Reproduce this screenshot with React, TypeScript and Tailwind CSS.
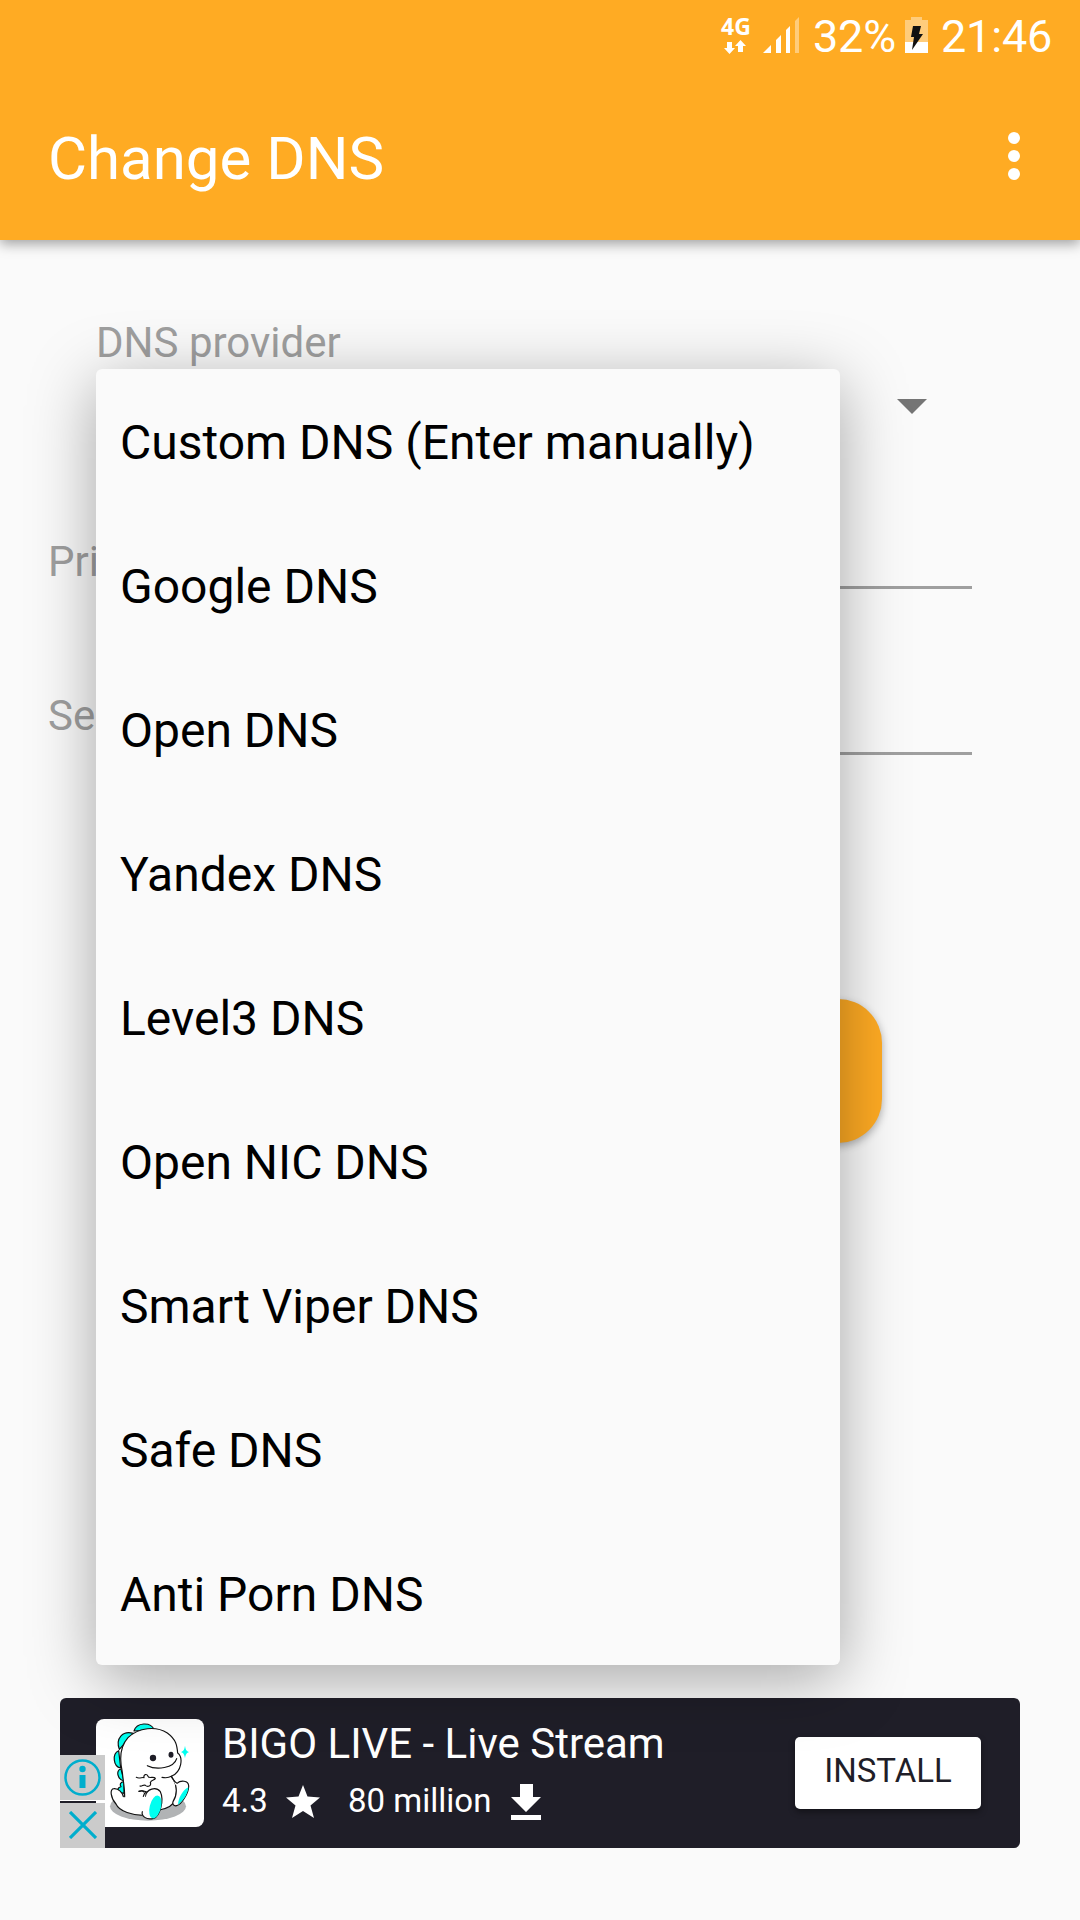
const PROVIDERS = [
  "Custom DNS (Enter manually)",
  "Google DNS",
  "Open DNS",
  "Yandex DNS",
  "Level3 DNS",
  "Open NIC DNS",
  "Smart Viper DNS",
  "Safe DNS",
  "Anti Porn DNS",
];

function NetworkIcon() {
  return (
    <div className="flex w-[30px] flex-col items-center">
      <span className="-mt-px font-['Open_Sans'] text-[23px] leading-[20px] font-bold">4G</span>
      <svg className="mt-[4px]" width="24" height="14" viewBox="0 0 24 14" fill="#fff">
        <path d="M3 2h5v6h3l-5.500 6L0 8h3z" />
        <path d="M14 12h5V6h3L16.500 0 11 6h3z" />
      </svg>
    </div>
  );
}

function SignalIcon() {
  return (
    <svg width="37" height="37" viewBox="0 0 37 37" fill="#fff">
      <path d="M0 36l8-8v8zM13 23l5-5v18h-5zM23 13l4-4v27h-4z" />
      <path d="M32 4l4-4v36h-4z" opacity=".4" />
    </svg>
  );
}

function BatteryIcon() {
  return (
    <svg width="24" height="36" viewBox="0 0 24 36">
      <path d="M6 0h11v3h6v22H0V3h6z" fill="#fff" opacity=".4" />
      <path d="M0 25h23v11H0z" fill="#fff" />
      <path d="M8 9h8l-2 8h4L7 33l2-13H6z" fill="#111" />
    </svg>
  );
}

function StatusBar() {
  return (
    <div className="flex h-[72px] items-start pt-[17px] pl-[721px] text-white">
      <NetworkIcon />
      <div className="ml-[12px]">
        <SignalIcon />
      </div>
      <span className="mt-px ml-[13px] w-[82px] text-[45px] leading-[38px] tracking-[-0.2px] whitespace-nowrap">32%</span>
      <div className="ml-[10px]">
        <BatteryIcon />
      </div>
      <span className="mt-px ml-[12px] text-[45px] leading-[38px] tracking-[-0.2px]">21:46</span>
    </div>
  );
}

function Toolbar() {
  return (
    <div className="flex h-[168px] items-center justify-between pr-[60px] pl-12">
      <h1 className="mt-[5px] text-[60px] leading-[70px] text-white">Change DNS</h1>
      <div className="flex flex-col gap-[6px]">
        <span className="size-3 rounded-full bg-white" />
        <span className="size-3 rounded-full bg-white" />
        <span className="size-3 rounded-full bg-white" />
      </div>
    </div>
  );
}

function ProviderMenu() {
  return (
    <ul className="absolute top-[369px] left-24 w-[744px] rounded-[6px] bg-[#fafafa] shadow-[0_14px_66px_rgba(0,0,0,0.34)]">
      {PROVIDERS.map((name) => (
        <li key={name} className="flex h-36 items-center px-6 pt-[4px] text-[48px] text-black">
          {name}
        </li>
      ))}
    </ul>
  );
}

function Dino() {
  return (
    <svg width="108" height="108" viewBox="0 0 324 324" fill="none" stroke="#111" strokeWidth="3.500" strokeLinecap="round" strokeLinejoin="round">
      <ellipse cx="156" cy="262" rx="114" ry="43" fill="#b1b3b5" stroke="none" />
      <g fill="#00fff0">
        <path d="M114 36C122 10 163 8 174 31z" />
        <path d="M70 91C58 58 80 34 112 43z" />
        <path d="M68 95C48 104 51 142 74 147z" />
        <path d="M75 150C58 153 65 183 84 186z" />
        <path d="M84 188C73 189 70 196 75 203C62 207 62 220 84 223z" />
      </g>
      <path
        fill="#fff"
        d="M86 233C86 205 82 190 79 160C70 120 70 85 96 56C128 25 180 20 214 42C241 62 243 80 245 102C262 115 258 158 226 172C243 196 247 218 237 244C229 263 211 270 190 273L140 289C112 289 70 278 60 255C44 237 40 209 54 209C68 208 80 222 82 233"
      />
      <path stroke="#fff" strokeWidth="6" d="M186 274L140 287" />
      <path d="M226 172C219 176 208 177 198 175" />
      <path fill="#fff" d="M226 172C231 180 234 189 243 193C254 183 277 184 278 200C279 222 256 257 242 260C233 262 229 256 231 248C240 234 243 217 239 199" />
      <path fill="#00fff0" stroke="none" d="M277 205C259 214 247 238 246 257C263 244 276 224 277 205z" />
      <path fill="#fff" d="M129 217C142 213 147 217 148 232C152 209 180 202 193 218C205 243 192 291 173 298C151 304 135 291 139 278" />
      <path stroke="#fff" strokeWidth="5" d="M146 222L141 274" />
      <path d="M129 217C142 212 147 218 151 219M142 232Q144 222 151 218" />
      <ellipse cx="178" cy="264" rx="17" ry="35" transform="rotate(14 178 264)" fill="#00fff0" stroke="none" />
      <path d="M121 175C130 181 139 173 144 176C142 166 152 163 156 172C158 180 174 171 178 178C177 184 165 182 163 191C167 201 155 205 148 199C142 195 138 204 132 201" />
      <circle cx="171" cy="117" r="9.500" fill="#1e1d27" stroke="none" />
      <ellipse cx="225" cy="107" rx="7.500" ry="9" fill="#1e1d27" stroke="none" />
      <path d="M154 140C181 154 234 148 242 119" />
      <path d="M267 80C269 94 272 96 279 99C272 102 269 105 267 118C265 105 262 102 255 99C262 96 265 94 267 80z" fill="#00fff0" stroke="none" />
    </svg>
  );
}

function AdControls() {
  return (
    <div className="absolute top-[57px] left-0 flex w-[45px] flex-col gap-[3px]">
      <div className="flex h-[45px] items-center justify-center bg-[#cbcbcb]">
        <svg width="37" height="37" viewBox="0 0 37 37" fill="#00aecd">
          <circle cx="18.500" cy="18.500" r="17" fill="none" stroke="#00aecd" strokeWidth="2.500" />
          <circle cx="18.500" cy="10" r="3.200" />
          <path d="M15.500 16h6v13h-6z" />
        </svg>
      </div>
      <div className="absolute top-[45px] left-0 h-px w-9 bg-white" />
      <div className="flex h-[45px] items-center justify-center bg-[#cbcbcb]">
        <svg className="-mt-px" width="28" height="28" viewBox="0 0 28 28" stroke="#00aecd" strokeWidth="3.200">
          <path d="M1 1l26 26M27 1L1 27" />
        </svg>
      </div>
    </div>
  );
}

function AdBanner() {
  return (
    <div className="relative mx-[60px] flex h-[150px] items-start overflow-hidden rounded-t-[6px] rounded-br-[6px] bg-[#1f1e28] pl-9 text-white">
      <div className="mt-[21px] size-[108px] overflow-hidden rounded-[8px] bg-white">
        <Dino />
      </div>
      <div className="mt-[21px] ml-[18px] flex w-[573px] flex-col">
        <span className="text-[42px] leading-[50px]">BIGO LIVE - Live Stream</span>
        <div className="mt-[7px] flex h-[50px] items-center text-[33px] leading-[50px]">
          <span className="w-[64px]">4.3</span>
          <svg width="34" height="33" viewBox="0 0 34 33" fill="#fff">
            <path d="M17 0l4.500 11.500L34 12.500l-9.500 8L28 33l-11-7L6 33l3.500-12.500-9.500-8 12.500-1z" />
          </svg>
          <span className="ml-[28px] w-[163px]">80 million</span>
          <svg className="mt-[3px]" width="30" height="37" viewBox="0 0 30 37" fill="#fff">
            <path d="M9 0h13v13h8L15 28 0 13h9zM0 31h30v5H0z" />
          </svg>
        </div>
      </div>
      <div className="mt-[39px] flex h-[72px] w-[186px] items-center justify-center rounded-[5px] bg-white text-[33px] text-[#1f1e28] shadow-[0_3px_6px_rgba(0,0,0,0.4)]">
        <span className="-mt-[4px]">INSTALL</span>
      </div>
      <AdControls />
    </div>
  );
}

export default function App() {
  return (
    <div className="relative flex h-[1920px] w-[1080px] flex-col overflow-hidden bg-[#fafafa] font-[Roboto,sans-serif]">
      <header className="bg-[#ffab23] shadow-[0_4px_12px_rgba(0,0,0,0.36)]">
        <StatusBar />
        <Toolbar />
      </header>

      <main className="flex h-[1458px] flex-col text-[42px] leading-[50px] text-[#9f9f9f]">
        <div className="mt-[78px] pl-24">DNS provider</div>
        <div className="mt-[31px] flex h-[15px] justify-end pr-[153px]">
          <svg width="30" height="15" viewBox="0 0 30 15" fill="#757575">
            <path d="M0 0h30L15 15z" />
          </svg>
        </div>
        <div className="mt-[123px] flex h-[52px] pl-12">
          <span>Pri</span>
          <div className="mr-[108px] ml-auto w-[600px] border-b-[3px] border-[#9f9f9f]" />
        </div>
        <div className="mt-[102px] flex h-[64px] pl-12">
          <span>Se</span>
          <div className="mr-[108px] ml-auto w-[600px] border-b-[3px] border-[#9f9f9f]" />
        </div>
        <div className="mt-[244px] h-36 w-[684px] self-center rounded-[44px] bg-[#ffab23] shadow-[0_3px_8px_rgba(0,0,0,0.3)]" />
      </main>

      <AdBanner />
      <ProviderMenu />
    </div>
  );
}
